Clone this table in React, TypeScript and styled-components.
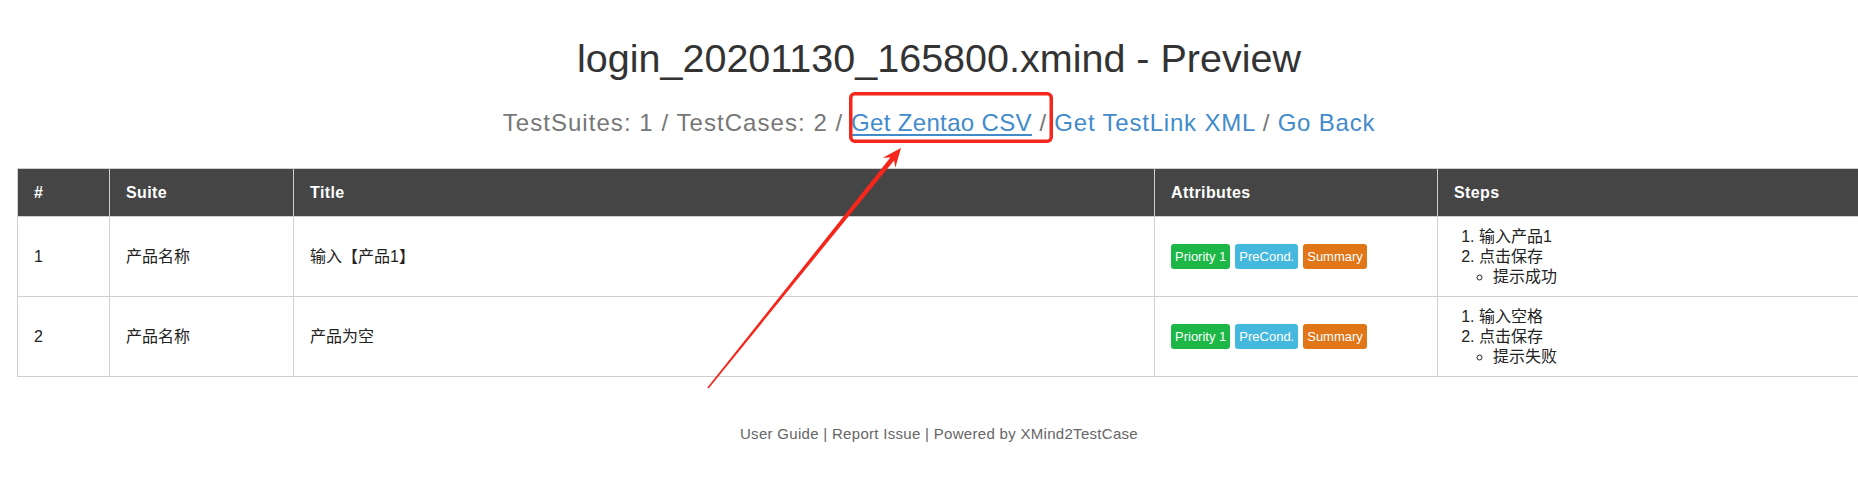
import React from "react";
import styled, { createGlobalStyle } from "styled-components";

const GlobalStyle = createGlobalStyle`
  html, body {
    margin: 0;
    padding: 0;
    background: #ffffff;
    overflow: hidden;
  }
  body {
    font-family: "Liberation Sans", "Noto Sans CJK SC", sans-serif;
    color: #333333;
  }
`;

const Page = styled.div`
  position: relative;
  width: 1858px;
  height: 489px;
  padding-left: 17px;
  box-sizing: border-box;
`;

const Container = styled.div`
  width: 1844px;
  display: flex;
  flex-direction: column;
  align-items: stretch;
`;

const Title = styled.h1`
  margin: 36px 0 0;
  font-size: 39.5px;
  line-height: 44px;
  font-weight: normal;
  color: #333333;
  text-align: center;
`;

const Subtitle = styled.p`
  margin: 29px 0 0;
  font-size: 24px;
  line-height: 28px;
  letter-spacing: 0.8px;
  color: #777777;
  text-align: center;
`;

const Counts = styled.span`
  letter-spacing: 1.05px;
`;

const Link = styled.a<{ $underline?: boolean }>`
  color: #428bca;
  text-decoration: ${(p) => (p.$underline ? "underline" : "none")};
  letter-spacing: ${(p) => (p.$underline ? "0.35px" : "0.8px")};
  text-underline-offset: 3px;
  text-decoration-thickness: 1.5px;
`;

const Table = styled.table`
  margin-top: 31px;
  width: 1844px;
  border-collapse: collapse;
  table-layout: fixed;
  font-size: 16px;
  line-height: 20px;
`;

const HeadCell = styled.th`
  background: #454545;
  color: #ffffff;
  font-weight: bold;
  font-size: 16px;
  letter-spacing: 0.4px;
  text-align: left;
  padding: 13.5px 16px;
  border: 1px solid #cfcfcf;
  line-height: 20px;
`;

const Cell = styled.td`
  padding: 9.5px 16px;
  border: 1px solid #cfcfcf;
  vertical-align: middle;
  color: #222222;
  height: 60px;
`;

const Badges = styled.div`
  display: flex;
  gap: 5px;
  align-items: center;
`;

const Badge = styled.span<{ $bg: string }>`
  display: inline-block;
  background: ${(p) => p.$bg};
  color: #ffffff;
  font-size: 13px;
  line-height: 16px;
  padding: 4.5px 4px;
  border-radius: 3px;
  white-space: nowrap;
`;

const Steps = styled.ol`
  margin: 0;
  padding-left: 25px;
`;

const SubSteps = styled.ul`
  margin: 0;
  padding-left: 14px;
  list-style-type: circle;
`;

const Footer = styled.footer`
  margin-top: 47px;
  text-align: center;
  font-size: 15px;
  line-height: 20px;
  letter-spacing: 0.3px;
  color: #666666;
`;

const Overlay = styled.svg`
  position: absolute;
  left: 0;
  top: 0;
  pointer-events: none;
`;

type Row = {
  id: number;
  suite: string;
  title: string;
  steps: string[];
  result: string;
};

const rows: Row[] = [
  { id: 1, suite: "产品名称", title: "输入【产品1】", steps: ["输入产品1", "点击保存"], result: "提示成功" },
  { id: 2, suite: "产品名称", title: "产品为空", steps: ["输入空格", "点击保存"], result: "提示失败" },
];

const cols = [92, 184, 861, 283, 424];

function Arrow() {
  const T = [901, 148];
  const tail = [708, 388];
  const dx = T[0] - tail[0];
  const dy = T[1] - tail[1];
  const len = Math.hypot(dx, dy);
  const u = [dx / len, dy / len];
  const n = [-u[1], u[0]];
  const at = (d: number, w: number) => [T[0] - d * u[0] + w * n[0], T[1] - d * u[1] + w * n[1]];
  const pts = [
    [tail[0] - 0.8 * n[0], tail[1] - 0.8 * n[1]],
    at(14, -2.4),
    at(19, -8),
    T,
    at(19, 8),
    at(14, 2.4),
    [tail[0] + 0.8 * n[0], tail[1] + 0.8 * n[1]],
  ];
  return <polygon points={pts.map((p) => p.join(",")).join(" ")} fill="#f5261b" />;
}

export default function App() {
  return (
    <Page>
      <GlobalStyle />
      <Container>
        <Title>login_20201130_165800.xmind - Preview</Title>
        <Subtitle>
          <Counts>TestSuites: 1 / TestCases: 2 / </Counts>
          <Link href="#" $underline>Get Zentao CSV</Link> /{" "}
          <Link href="#">Get TestLink XML</Link> / <Link href="#">Go Back</Link>
        </Subtitle>
        <Table>
          <colgroup>
            {cols.map((w, i) => (
              <col key={i} style={{ width: w }} />
            ))}
          </colgroup>
          <thead>
            <tr>
              <HeadCell>#</HeadCell>
              <HeadCell>Suite</HeadCell>
              <HeadCell>Title</HeadCell>
              <HeadCell>Attributes</HeadCell>
              <HeadCell>Steps</HeadCell>
            </tr>
          </thead>
          <tbody>
            {rows.map((r) => (
              <tr key={r.id}>
                <Cell>{r.id}</Cell>
                <Cell>{r.suite}</Cell>
                <Cell>{r.title}</Cell>
                <Cell>
                  <Badges>
                    <Badge $bg="#1db748">Priority 1</Badge>
                    <Badge $bg="#45b8de">PreCond.</Badge>
                    <Badge $bg="#e07618">Summary</Badge>
                  </Badges>
                </Cell>
                <Cell>
                  <Steps>
                    <li>{r.steps[0]}</li>
                    <li>
                      {r.steps[1]}
                      <SubSteps>
                        <li>{r.result}</li>
                      </SubSteps>
                    </li>
                  </Steps>
                </Cell>
              </tr>
            ))}
          </tbody>
        </Table>
        <Footer>User Guide | Report Issue | Powered by XMind2TestCase</Footer>
      </Container>
      <Overlay width="1858" height="489" viewBox="0 0 1858 489">
        <rect x="850.75" y="93.75" width="200.5" height="47.5" rx="4" fill="none" stroke="#f5261b" strokeWidth="3.5" />
        <Arrow />
      </Overlay>
    </Page>
  );
}
